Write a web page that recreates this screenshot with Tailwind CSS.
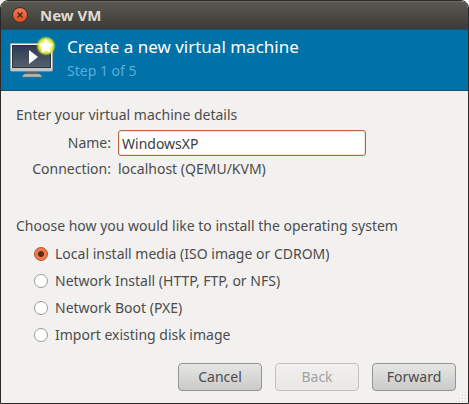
<!DOCTYPE html>
<html lang="en">
<head>
    <meta charset="UTF-8">
    <meta name="viewport" content="width=device-width, initial-scale=1.0">
    <title>New VM</title>
    <script src="https://cdn.jsdelivr.net/npm/@tailwindcss/browser@4"></script>
</head>
<body class="bg-white font-['Noto_Sans',sans-serif] text-sm text-[#4c4c4c]">
    <div class="relative min-h-screen flex flex-col rounded-t-lg overflow-hidden border border-[#2b2a28] bg-[#f2f1f0]">
        <!-- Title bar -->
        <div class="h-7 flex items-center gap-3 pl-[11px] pb-[2px] bg-linear-to-b from-[#5a5852] to-[#3c3b37] border-t border-[#6b6964]">
            <button type="button" aria-label="Close" class="size-4 shrink-0 rounded-full bg-linear-to-b from-[#f47b50] to-[#df4b1c] border border-[#33312c] flex items-center justify-center">
                <svg class="size-2" viewBox="0 0 8 8" fill="none" stroke="#3c2a20" stroke-width="1.4"><path d="M1.5 1.5l5 5M6.5 1.5l-5 5"/></svg>
            </button>
            <h1 class="text-[15px] font-bold text-[#dfdbd2] leading-5">New VM</h1>
        </div>

        <!-- Step header -->
        <header class="h-[62px] flex items-center gap-3 pl-2 pb-[2px] bg-[#0072a8] border-y border-[#1d4f68]">
            <svg class="w-[48px] h-12 -mr-[2px] shrink-0" viewBox="0 0 48 48">
                <defs>
                    <linearGradient id="screen" x1="0" y1="0" x2="0" y2="1">
                        <stop offset="0" stop-color="#2c3a50"/>
                        <stop offset="1" stop-color="#56606f"/>
                    </linearGradient>
                    <radialGradient id="glow">
                        <stop offset="0.5" stop-color="#f6f780"/>
                        <stop offset="0.75" stop-color="#e2ea2c" stop-opacity="0.9"/>
                        <stop offset="1" stop-color="#c0d830" stop-opacity="0"/>
                    </radialGradient>
                </defs>
                <path d="M17 36h12v3H17z" fill="#5d6065"/>
                <path d="M15 39h16l2 3H13z" fill="#b9b9b7" stroke="#77797b" stroke-width="0.6"/>
                <rect x="1.5" y="8.5" width="42" height="27.5" rx="1" fill="#f2f2f0" stroke="#a5a6a6"/>
                <path d="M2 33h41v3H2z" fill="#c4c4c2"/>
                <rect x="3.5" y="10.5" width="38" height="22" fill="url(#screen)" stroke="#273346"/>
                <path d="M20 15v14l9-7z" fill="#fff"/>
                <circle cx="37" cy="11" r="10" fill="url(#glow)"/>
                <path d="M37 4.500l2 4.200 4.600.6-3.300 3.300.8 4.600-4.100-2.200-4.100 2.200.8-4.600-3.300-3.300 4.600-.6z" fill="#fff" stroke="#fff" stroke-width="0.8" stroke-linejoin="round"/>
            </svg>
            <div>
                <h2 class="text-[17px] leading-6 text-white">Create a new virtual machine</h2>
                <p class="leading-6 text-[#5cabdd]">Step 1 of 5</p>
            </div>
        </header>

        <form class="flex-1 flex flex-col pt-3 pb-3 pl-[15px] pr-3">
            <p class="leading-6">Enter your virtual machine details</p>
            <div class="grid grid-cols-[95px_minmax(0,1fr)] gap-x-[7px] items-center pt-[3px] pr-[90px]">
                <label for="name" class="text-right">Name:</label>
                <input id="name" type="text" value="WindowsXP" class="w-full h-[26px] px-[3px] bg-white border border-[#c0603c] rounded-[3px] inset-ring inset-ring-[#fbe3d8] text-[#3c3c3c] outline-none">
                <span class="text-right leading-[26px]">Connection:</span>
                <span class="leading-[26px] whitespace-nowrap">localhost (QEMU/KVM)</span>
            </div>

            <fieldset class="mt-8">
                <legend class="leading-6 whitespace-nowrap">Choose how you would like to install the operating system</legend>
                <div class="flex flex-col pl-[18px] pt-[2px]">
                    <label class="h-[27px] flex items-center gap-[7px]">
                        <input type="radio" name="method" checked class="appearance-none size-[14px] rounded-full border border-[#9c9a97] bg-white checked:border-[#b8502a] checked:bg-radial checked:from-[#5a2c18] checked:from-30% checked:to-[#f0794d] checked:to-40%">
                        Local install media (ISO image or CDROM)
                    </label>
                    <label class="h-[27px] flex items-center gap-[7px]">
                        <input type="radio" name="method" class="appearance-none size-[14px] rounded-full border border-[#9c9a97] bg-white checked:border-[#b8502a] checked:bg-radial checked:from-[#5a2c18] checked:from-30% checked:to-[#f0794d] checked:to-40%">
                        Network Install (HTTP, FTP, or NFS)
                    </label>
                    <label class="h-[27px] flex items-center gap-[7px]">
                        <input type="radio" name="method" class="appearance-none size-[14px] rounded-full border border-[#9c9a97] bg-white checked:border-[#b8502a] checked:bg-radial checked:from-[#5a2c18] checked:from-30% checked:to-[#f0794d] checked:to-40%">
                        Network Boot (PXE)
                    </label>
                    <label class="h-[27px] flex items-center gap-[7px]">
                        <input type="radio" name="method" class="appearance-none size-[14px] rounded-full border border-[#9c9a97] bg-white checked:border-[#b8502a] checked:bg-radial checked:from-[#5a2c18] checked:from-30% checked:to-[#f0794d] checked:to-40%">
                        Import existing disk image
                    </label>
                </div>
            </fieldset>

            <div class="mt-auto flex justify-end gap-[13px]">
                <button type="button" class="w-[84px] h-7 rounded border border-[#979592] bg-linear-to-b from-[#e6e6e5] to-[#cacaca]">Cancel</button>
                <button type="button" disabled class="w-[84px] h-7 rounded border border-[#c2c1c0] bg-linear-to-b from-[#f1f0ef] to-[#e9e8e7] text-[#a3a2a1]">Back</button>
                <button type="submit" class="w-[84px] h-7 rounded border border-[#979592] bg-linear-to-b from-[#e6e6e5] to-[#cacaca]">Forward</button>
            </div>
        </form>

        <!-- Resize grip -->
        <svg class="absolute right-0 bottom-0 size-3" viewBox="0 0 12 12" fill="#d0cfcd">
            <path d="M9 1h1v1H9zM6 4h1v1H6zM9 4h1v1H9zM3 7h1v1H3zM6 7h1v1H6zM9 7h1v1H9zM0 10h1v1H0zM3 10h1v1H3zM6 10h1v1H6zM9 10h1v1H9z"/>
            <path d="M10 2h1v1h-1zM7 5h1v1H7zM10 5h1v1h-1zM4 8h1v1H4zM7 8h1v1H7zM10 8h1v1h-1zM1 11h1v1H1zM4 11h1v1H4zM7 11h1v1H7zM10 11h1v1h-1z" fill="#fff"/>
        </svg>
    </div>
</body>
</html>
